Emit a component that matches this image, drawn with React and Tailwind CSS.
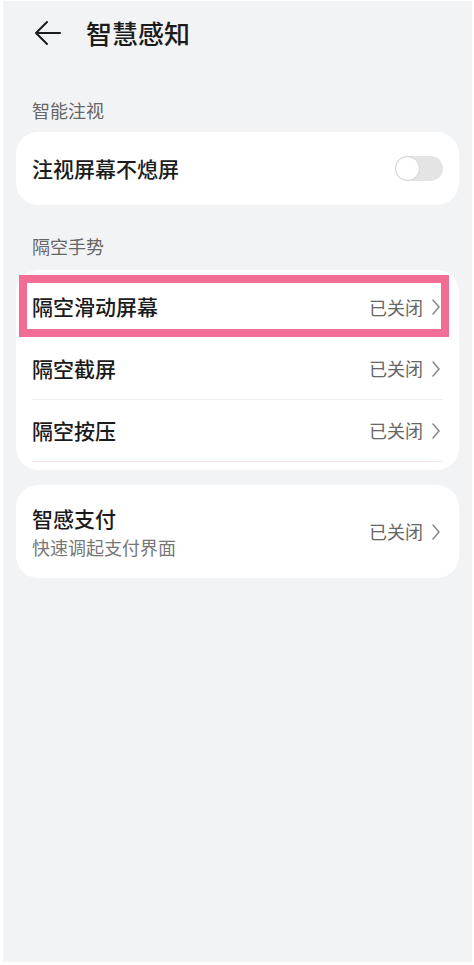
import React, { useState } from "react";

const font = { fontFamily: '"Noto Sans CJK SC", "Noto Sans", sans-serif' };
const medium = { fontFamily: '"Noto Sans CJK SC Medium", "Noto Sans CJK SC", sans-serif' };

const Chevron = () => (
  <svg width="10" height="18" viewBox="0 0 10 18" fill="none" className="ml-[8px]">
    <path d="M2 2l6 7-6 7" stroke="#8a8a8a" strokeWidth="1.6" strokeLinecap="round" strokeLinejoin="round" />
  </svg>
);

const Toggle = ({ on, onClick }) => (
  <button
    onClick={onClick}
    className={`relative w-[48px] h-[25px] rounded-full ${on ? "bg-[#0a59f7]" : "bg-[#e4e4e4]"}`}
  >
    <span
      className={`absolute top-0 w-[25px] h-[25px] rounded-full bg-white border-[1.5px] border-[#d2d2d2] ${on ? "left-[23px]" : "left-0"}`}
    />
  </button>
);

const Status = () => (
  <div className="flex items-center mr-[2px]">
    <span className="text-[18px] text-[#666]">已关闭</span>
    <Chevron />
  </div>
);

const ArrowRow = ({ title, divider, highlight }) => (
  <div className={`relative h-[62px] mx-4 flex items-center justify-between ${divider || ""}`}>
    <span className="text-[21px] text-[#1b1b1b]" style={medium}>{title}</span>
    <Status />
    {highlight && (
      <div className="absolute left-[-13px] right-[-6px] top-[-1px] h-[62px] border-[8px] border-[#f26d94] pointer-events-none" />
    )}
  </div>
);

const App = () => {
  const [gaze, setGaze] = useState(false);

  return (
    <div className="w-[474px] h-[965px] bg-white pl-[3px] pr-[2px] pt-px pb-[3px]" style={font}>
      <div className="h-full bg-[#f2f3f5] overflow-hidden">
        <div className="h-[64px] flex items-center pl-[31px]">
          <svg width="28" height="26" viewBox="0 0 28 26" fill="none">
            <path d="M26 13H2M13 2L2 13l11 11" stroke="#1b1b1b" strokeWidth="2" strokeLinecap="round" strokeLinejoin="round" />
          </svg>
          <h1 className="ml-[24px] text-[26px] text-[#1b1b1b] leading-none" style={medium}>智慧感知</h1>
        </div>

        <div className="mt-[36px] px-[29px] text-[18px] text-[#666] leading-none">智能注视</div>
        <div className="mt-[13px] mx-[13px] h-[73px] bg-white rounded-[22px] flex items-center justify-between px-4">
          <span className="text-[21px] text-[#1b1b1b]" style={medium}>注视屏幕不熄屏</span>
          <Toggle on={gaze} onClick={() => setGaze(!gaze)} />
        </div>

        <div className="mt-[32px] px-[29px] text-[18px] text-[#666] leading-none">隔空手势</div>
        <div className="mt-[15px] mx-[13px] bg-white rounded-[22px] pt-[6px] pb-[8px]">
          <ArrowRow title="隔空滑动屏幕" highlight />
          <ArrowRow title="隔空截屏" divider="border-b border-[#ededed]" />
          <ArrowRow title="隔空按压" divider="border-b border-[#f6e4e9]" />
        </div>

        <div className="mt-[15px] mx-[13px] h-[93px] bg-white rounded-[22px] flex items-center justify-between px-4">
          <div className="flex flex-col">
            <span className="text-[21px] text-[#1b1b1b] leading-[28px]" style={medium}>智感支付</span>
            <span className="text-[18px] text-[#777] leading-[26px] mt-[2px]">快速调起支付界面</span>
          </div>
          <Status />
        </div>
      </div>
    </div>
  );
};

export default App;
